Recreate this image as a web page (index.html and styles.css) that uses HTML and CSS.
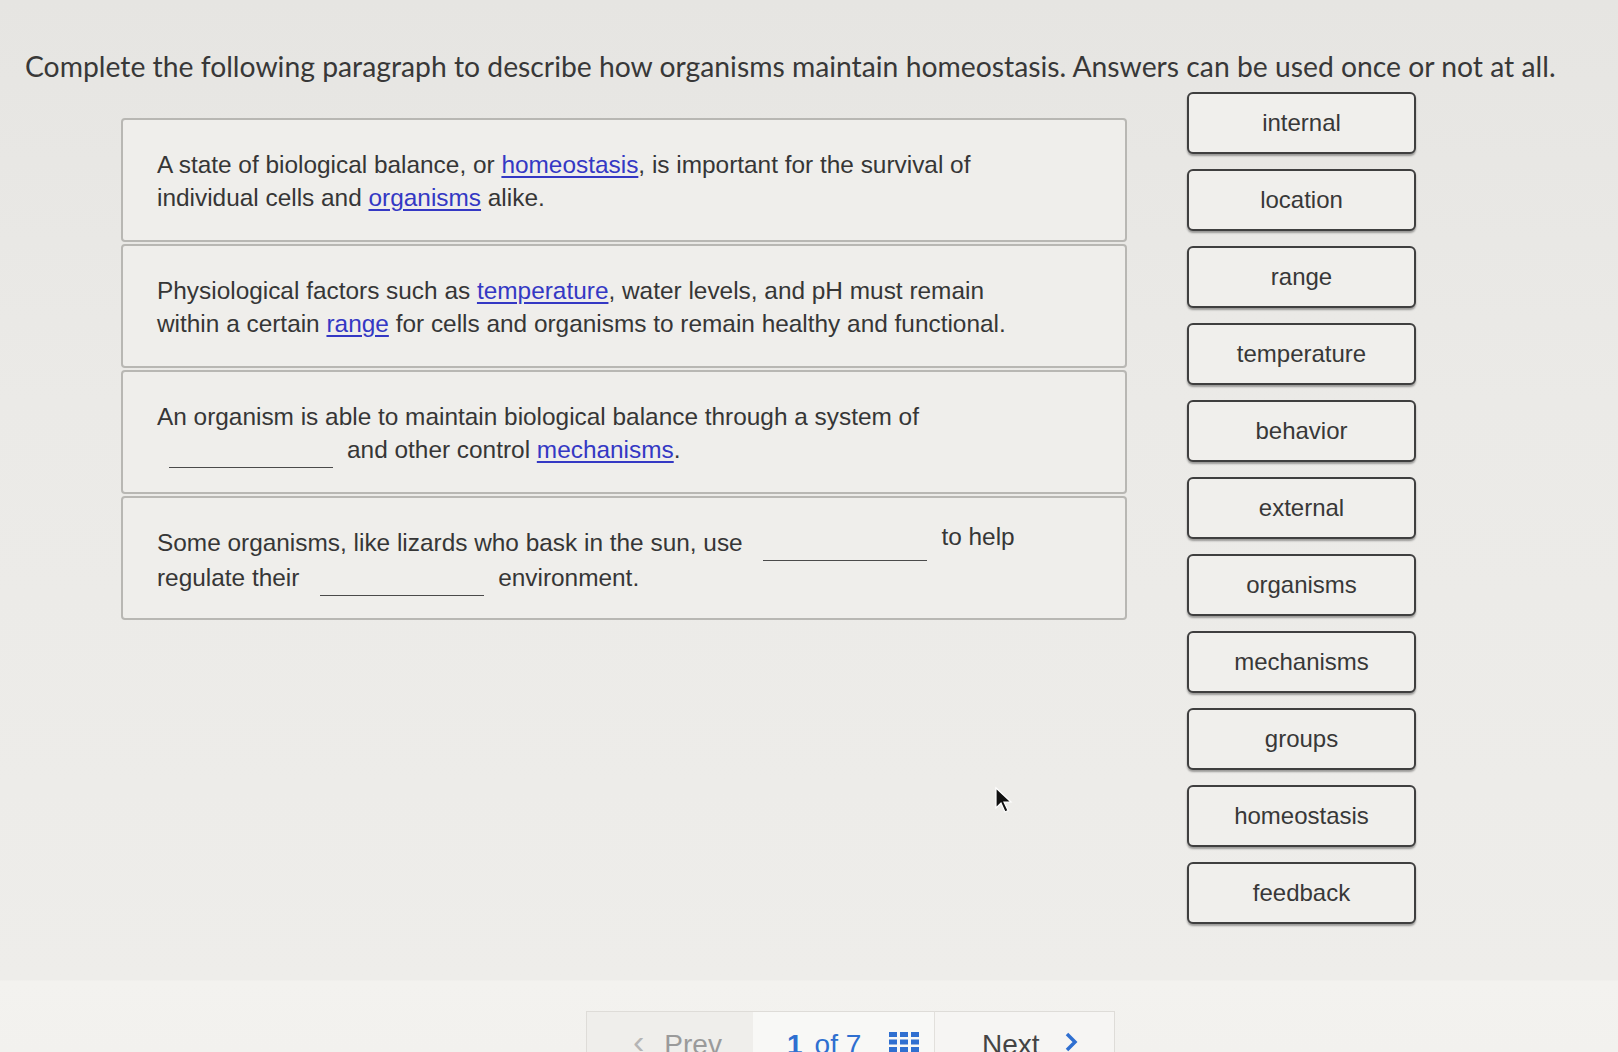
FILE: index.html
```html
<!DOCTYPE html>
<html lang="en">
<head>
<meta charset="utf-8">
<title>Homeostasis</title>
<link rel="stylesheet" href="styles.css">
</head>
<body>
<div class="page">
  <h1 class="prompt">Complete the following paragraph to describe how organisms maintain homeostasis. Answers can be used once or not at all.</h1>
  <div class="content">
    <div class="targets">
      <div class="target">
        <p class="para">A state of biological balance, or <a class="lnk">homeostasis</a>, is important for the survival of individual cells and <a class="lnk">organisms</a> alike.</p>
      </div>
      <div class="target">
        <p class="para">Physiological factors such as <a class="lnk">temperature</a>, water levels, and pH must remain within a certain <a class="lnk">range</a> for cells and organisms to remain healthy and functional.</p>
      </div>
      <div class="target">
        <p class="para">An organism is able to maintain biological balance through a system of <span class="blank first"></span>and other control <a class="lnk">mechanisms</a>.</p>
      </div>
      <div class="target">
        <p class="para">Some organisms, like lizards who bask in the sun, use <span class="blank"></span><span class="raised">to help</span> regulate their <span class="blank"></span>environment.</p>
      </div>
    </div>
    <div class="bank">
      <div class="tile">internal</div>
      <div class="tile">location</div>
      <div class="tile">range</div>
      <div class="tile">temperature</div>
      <div class="tile">behavior</div>
      <div class="tile">external</div>
      <div class="tile">organisms</div>
      <div class="tile">mechanisms</div>
      <div class="tile">groups</div>
      <div class="tile">homeostasis</div>
      <div class="tile">feedback</div>
    </div>
  </div>
  <div class="footer">
    <div class="nav">
      <div class="nav-seg prev"><span class="chev left">&#8249;</span>Prev</div>
      <div class="nav-seg mid"><span class="cur">1</span> of 7
        <svg class="grid" width="30" height="20" viewBox="0 0 30 20">
          <rect x="0" y="0" width="8" height="5" fill="#2f6fd0"/>
          <rect x="11" y="0" width="8" height="5" fill="#2f6fd0"/>
          <rect x="22" y="0" width="8" height="5" fill="#2f6fd0"/>
          <rect x="0" y="7.5" width="8" height="5" fill="#2f6fd0"/>
          <rect x="11" y="7.5" width="8" height="5" fill="#2f6fd0"/>
          <rect x="22" y="7.5" width="8" height="5" fill="#2f6fd0"/>
          <rect x="0" y="15" width="8" height="5" fill="#2f6fd0"/>
          <rect x="11" y="15" width="8" height="5" fill="#2f6fd0"/>
          <rect x="22" y="15" width="8" height="5" fill="#2f6fd0"/>
        </svg>
      </div>
      <div class="nav-seg next">Next
        <svg class="nchev" width="14" height="20" viewBox="0 0 14 20"><path d="M3 2 L11 10 L3 18" fill="none" stroke="#2f6fd0" stroke-width="3.5"/></svg>
      </div>
    </div>
  </div>
  <svg class="cursor" width="20" height="30" viewBox="0 0 20 30"><path d="M2 2 L2 22 L7 17 L11 26 L14 24.5 L10 16 L17 16 Z" fill="#111" stroke="#fff" stroke-width="1.2"/></svg>
</div>
</body>
</html>
```
FILE: styles.css
```css
html, body {
  margin: 0;
  padding: 0;
}
body {
  background: #e9e8e5;
  width: 1618px;
  height: 1052px;
  overflow: hidden;
}
.page {
  position: relative;
  height: 1052px;
  display: flex;
  flex-direction: column;
  background: linear-gradient(#e6e5e2 0, #ebeae7 400px, #eeedea 980px, #f3f2ef 981px, #f2f1ee 1052px);
}
.prompt {
  margin: 0;
  padding: 50px 0 0 25px;
  font-family: Lato, "Open Sans", sans-serif;
  font-weight: 400;
  font-size: 28.3px;
  line-height: 32px;
  color: #383838;
  white-space: nowrap;
}
.content {
  display: flex;
  align-items: flex-start;
  padding-left: 121px;
  margin-top: 10px;
}
.targets {
  width: 1006px;
  margin-top: 26px;
  display: flex;
  flex-direction: column;
  gap: 2px;
}
.target {
  box-sizing: border-box;
  height: 124px;
  border: 2px solid #b8b7b3;
  border-radius: 4px;
  background: #efeeeb;
  padding: 28px 0 0 34px;
}
.para {
  margin: 0;
  width: 880px;
  font-family: "Liberation Sans", Arial, sans-serif;
  font-size: 24.4px;
  line-height: 33px;
  color: #363636;
}
.lnk {
  color: #3438c4;
  text-decoration: underline;
  text-underline-offset: 3px;
}
.blank {
  display: inline-block;
  width: 164px;
  height: 20px;
  border-bottom: 1.5px solid #4a4a4a;
  margin: 0 14px 0 14px;
  vertical-align: -10px;
}
.blank.first {
  margin-left: 12px;
}
.raised {
  position: relative;
  top: -6px;
}
.bank {
  margin-left: 60px;
  display: flex;
  flex-direction: column;
  gap: 15px;
}
.tile {
  box-sizing: border-box;
  width: 229px;
  height: 62px;
  border: 2px solid #3f3f3f;
  border-radius: 6px;
  background: #f0efec;
  box-shadow: 0 2px 2px rgba(0,0,0,0.35);
  font-family: "Liberation Sans", Arial, sans-serif;
  font-size: 24px;
  color: #383838;
  text-align: center;
  padding-top: 15px;
}
.footer {
  margin-top: auto;
  display: flex;
  padding-left: 586px;
}
.nav {
  display: flex;
  height: 41px;
  font-family: "Liberation Sans", Arial, sans-serif;
  font-size: 28px;
}
.nav-seg {
  box-sizing: border-box;
  height: 41px;
  padding-top: 17px;
  border-top: 1px solid #dedcd8;
  display: flex;
  align-items: flex-start;
  white-space: nowrap;
}
.prev {
  width: 167px;
  border-left: 1px solid #dedcd8;
  background: #efeeeb;
  color: #9a9a9a;
  padding-left: 46px;
}
.chev.left {
  font-size: 34px;
  line-height: 24px;
  color: #b5b5b5;
  margin-right: 20px;
}
.mid {
  width: 182px;
  background: #f8f8f6;
  color: #2f6fd0;
  padding-left: 34px;
  border-right: 1px solid #e2e0dc;
}
.cur {
  font-weight: 700;
  margin-right: 12px;
}
.grid {
  margin-left: 28px;
  margin-top: 3px;
}
.next {
  width: 180px;
  background: #f6f5f3;
  color: #444;
  padding-left: 47px;
  border-right: 1px solid #dedcd8;
}
.nchev {
  margin-left: 24px;
  margin-top: 3px;
}
.cursor {
  position: absolute;
  left: 994px;
  top: 786px;
}
```
